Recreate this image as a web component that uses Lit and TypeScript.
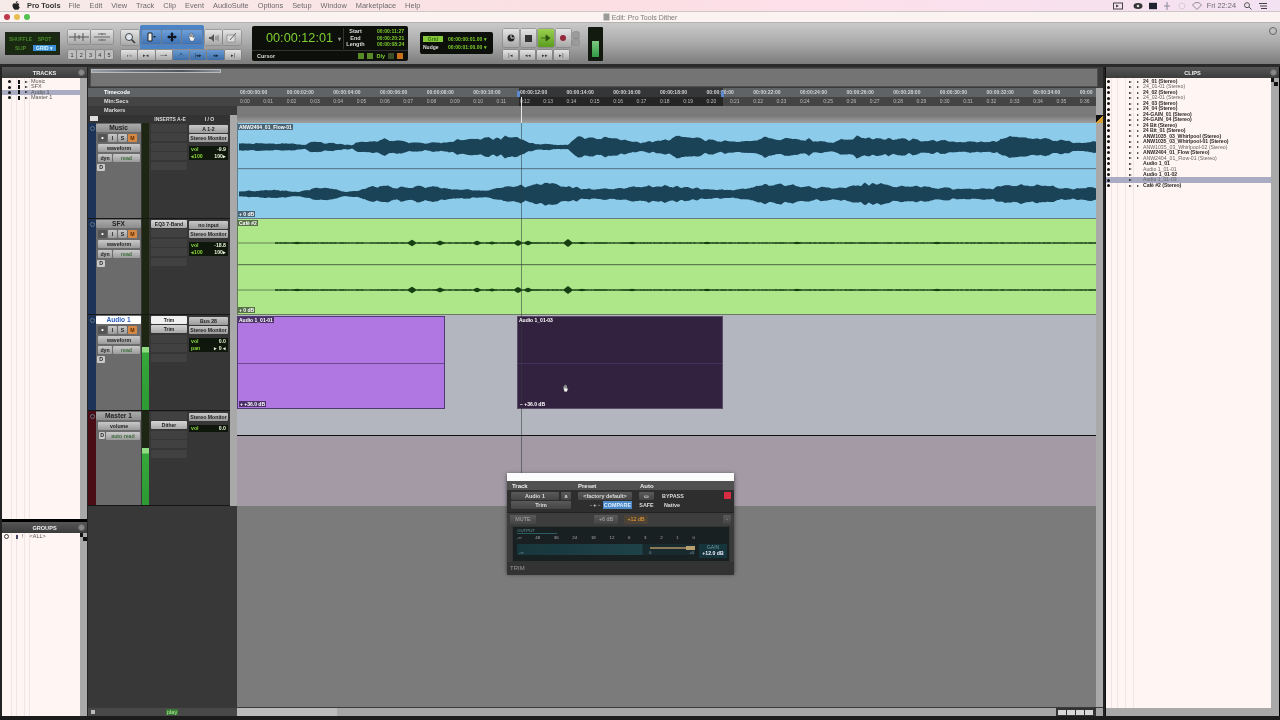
import { LitElement, html, css } from 'lit';
import { customElement } from 'lit/decorators.js';

const MENUS = ['File', 'Edit', 'View', 'Track', 'Clip', 'Event', 'AudioSuite', 'Options', 'Setup', 'Window', 'Marketplace', 'Help'];

const CLIPS = [
  ['24_01 (Stereo)', 1, 1], ['24_01-01 (Stereo)', 0, 1], ['24_02 (Stereo)', 1, 1], ['24_02-01 (Stereo)', 0, 1],
  ['24_03 (Stereo)', 1, 1], ['24_04 (Stereo)', 1, 1], ['24-GAIN_01 (Stereo)', 1, 1], ['24-GAIN_04 (Stereo)', 1, 1],
  ['24 Bit (Stereo)', 1, 1], ['24 Bit_01 (Stereo)', 1, 1], ['ANW1035_03_Whirlpool (Stereo)', 1, 1],
  ['ANW1035_03_Whirlpool-01 (Stereo)', 1, 1], ['ANW1035_03_Whirlpool-02 (Stereo)', 0, 1], ['ANW2404_01_Flow (Stereo)', 1, 1],
  ['ANW2404_01_Flow-01 (Stereo)', 0, 1], ['Audio 1_01', 1, 0], ['Audio 1_01-01', 0, 0], ['Audio 1_01-02', 1, 0],
  ['Audio 1_01-03', 0, 0], ['Café #2 (Stereo)', 1, 1],
] as [string, number, number][];

const TRACKS = [
  { name: 'Music', strip: '#1d3358', h: 96, view: 'waveform', auto: 'read', slots: ['', '', '', '', ''], io: ['A 1-2', 'Stereo Monitor'], vol: '-9.9', pan: ['◂100', '100▸'], meter: 0 },
  { name: 'SFX', strip: '#1d3358', h: 96, view: 'waveform', auto: 'read', slots: ['EQ3 7-Band', '', '', '', ''], io: ['no input', 'Stereo Monitor'], vol: '-18.8', pan: ['◂100', '100▸'], meter: 0 },
  { name: 'Audio 1', strip: '#1d3358', h: 96, view: 'waveform', auto: 'read', slots: ['Trim', 'Trim', '', '', ''], io: ['Bus 28', 'Stereo Monitor'], vol: '0.0', pan: ['pan', '▸ 0 ◂'], meter: 66, active: true },
  { name: 'Master 1', strip: '#4a0d16', h: 95, view: 'volume', auto: 'auto read', slots: ['', 'Dither', '', '', ''], io: ['Stereo Monitor'], vol: '0.0', meter: 61, master: true },
];

const MUSIC_A = [[0, 3.5], [53, 3.5], [68, 2], [75, 5], [98, 3.5], [115, 1.5], [119, 5], [135, 6], [148, 8], [163, 6], [183, 4], [203, 4], [225, 8], [253, 9], [278, 11], [298, 3], [331, 2], [341, 11], [373, 9], [403, 5], [423, 6], [443, 11], [473, 7], [503, 5], [528, 10], [563, 9], [593, 5], [623, 11], [663, 8], [713, 6], [753, 5], [773, 10], [813, 8], [838, 5], [859, 6]];
const MUSIC_B = [[0, 3], [40, 3.5], [62, 2], [72, 5], [90, 6], [110, 2], [122, 3], [135, 8], [160, 7], [190, 8], [215, 5], [250, 4], [280, 8], [300, 11], [325, 9], [350, 5], [400, 7], [430, 9], [460, 6], [500, 4], [530, 11], [560, 9], [600, 5], [625, 11], [660, 9], [710, 6], [750, 5], [775, 11], [810, 8], [840, 5], [859, 7]];
const SFX_BUMPS = [[60, 1], [175, 3], [203, 2.2], [240, 2], [255, 1.2], [281, 2.6], [291, 2], [331, 3.8], [345, 1], [395, 1], [470, 1], [560, 1], [700, 1]];

function noise(x: number, seed: number) {
  const v = Math.sin(x * 12.9898 + seed * 78.233) * 43758.5453;
  return v - Math.floor(v);
}

// value noise, so the outline comes out in lumps and not as a comb
function lumpy(x: number, seed: number) {
  const i = Math.floor(x / 4);
  const t = x / 4 - i;
  return noise(i, seed) * (1 - t) + noise(i + 1, seed) * t;
}

function level(env: number[][], x: number) {
  for (let i = 1; i < env.length; i++) {
    if (x <= env[i][0]) {
      const t = (x - env[i - 1][0]) / (env[i][0] - env[i - 1][0]);
      return env[i - 1][1] + (env[i][1] - env[i - 1][1]) * t;
    }
  }
  return env[env.length - 1][1];
}

function musicWave(env: number[][], cy: number, seed: number) {
  const up: string[] = [];
  const down: string[] = [];
  for (let x = 2; x <= 859; x++) {
    const a = level(env, x) * (0.7 + 0.4 * lumpy(x, seed));
    up.push(`${x},${(cy - a - 0.5 * noise(x, seed)).toFixed(1)}`);
    down.unshift(`${x},${(cy + a + 0.5 * noise(x, seed + 3)).toFixed(1)}`);
  }
  return up.concat(down).join(' ');
}

function sfxWave(cy: number, seed: number) {
  const up: string[] = [];
  const down: string[] = [];
  for (let x = 38; x <= 859; x++) {
    let a = 0.55 + 0.25 * noise(x, seed);
    for (const [bx, ba] of SFX_BUMPS) {
      const d = Math.abs(x - bx);
      if (d < 3.5) a = Math.max(a, ba * (1 - (d / 3.5) * 0.7) + 0.3);
    }
    up.push(`${x},${(cy - a).toFixed(1)}`);
    down.unshift(`${x},${(cy + a).toFixed(1)}`);
  }
  return up.concat(down).join(' ');
}

@customElement('app-root')
export class AppRoot extends LitElement {
  static styles = css`
    :host { display: block; width: 1280px; height: 720px; overflow: hidden; background: #161616; font-family: "Liberation Sans", Arial, sans-serif; }
    .app { position: relative; width: 1280px; height: 720px; display: flex; flex-direction: column; filter: blur(0.4px); }

    .menubar { height: 11px; flex: none; display: flex; align-items: center; background: linear-gradient(90deg, #f7ebe9, #fbdfe3 45%, #fde0ea 65%, #f3e2f2); font-size: 7.4px; color: #6d6a6c; }
    .apple { width: 8px; height: 9px; margin: 0 7px 0 12px; }
    .menubar b { color: #333; margin-right: 8px; }
    .menus { display: flex; gap: 9px; }
    .tray { margin-left: auto; display: flex; align-items: center; gap: 5px; padding-right: 12px; }
    .tray svg { width: 10px; height: 8px; }
    .tray .cam { margin-right: 5px; }
    .tray .eye { margin-right: 1px; }
    .tray .srch { margin-left: 2px; }
    .titlebar { height: 12px; flex: none; display: flex; align-items: center; justify-content: center; position: relative; background: #fbf3f1; border-top: 1px solid #cfc6c8; border-bottom: 1px solid #b5b0b0; box-sizing: border-box; font-size: 7px; color: #7d7a7a; gap: 2px; }
    .lights { position: absolute; left: 4px; top: 2px; display: flex; gap: 4px; }
    .lights i { width: 6px; height: 6px; border-radius: 50%; }

    .toolbar { height: 41px; flex: none; display: flex; align-items: flex-start; background: linear-gradient(#c9c9c9, #adadad 45%, #7c7c7c); }
    .modes { margin: 9px 0 0 5px; width: 55px; height: 23px; box-sizing: border-box; background: #1a2a12; border: 1px solid #222; padding: 2px 3px; display: grid; grid-template-columns: 1fr 1fr; font-size: 5px; font-weight: bold; color: #4b8a2c; text-align: center; gap: 1px; align-items: center; }
    .modes .on { background: #3f8ed8; color: #dff; }
    .zoomgrp { margin: 7px 0 0 8px; width: 45px; display: flex; flex-direction: column; gap: 6px; }
    .rowb { display: flex; gap: 1px; }
    .tb { background: linear-gradient(#e4e4e4, #a9a9a9); border-radius: 1px; display: flex; align-items: center; justify-content: center; color: #333; box-sizing: border-box; box-shadow: 0 0 0 .5px #7a7a7a; }
    .zoomgrp .big { height: 14px; flex: 1; }
    .num { height: 9px; flex: 1; font-size: 5.5px; background: #bdbdbd; }
    .tools { margin: 2px 0 0 8px; width: 120px; display: flex; flex-direction: column; gap: 1px; }
    .toolrow { display: flex; align-items: flex-end; height: 24px; gap: 1px; }
    .toolrow .tb { height: 15px; width: 18px; margin-bottom: 4px; }
    .bluegrp { width: 64px; height: 24px; box-sizing: border-box; background: #4c82c6; border-radius: 2px 2px 0 0; display: flex; gap: 1px; padding: 5px 2px 0; }
    .bluegrp .tb { width: 20px; height: 14px; margin: 0; background: linear-gradient(#6ea0da, #3f72b4); }
    .smalls { display: flex; gap: 1px; }
    .smalls .tb { height: 10px; flex: 1; font-size: 5px; }
    .smalls .blue { background: linear-gradient(#6c9bd2, #3d6ea8); color: #123; }
    .counter { margin: 3px 0 0 11px; width: 156px; height: 35px; background: #0c0f0a; border-radius: 2px; box-sizing: border-box; display: flex; flex-direction: column; color: #ddd; font-size: 5.5px; font-weight: bold; }
    .ctop { display: flex; height: 24px; align-items: center; border-bottom: 1px solid #333; }
    .bigtime { font-size: 12.7px; font-weight: normal; color: #7fd02e; margin-left: 14px; width: 72px; }
    .caret { color: #999; font-size: 6px; width: 5px; }
    .clabels { width: 24px; margin-left: 0; text-align: center; line-height: 6.4px; border-left: 1px solid #333; height: 21px; display: flex; flex-direction: column; justify-content: center; box-sizing: border-box; }
    .cvals { margin-left: 10px; color: #7fd02e; line-height: 6.4px; font-size: 5px; }
    .cbot { display: flex; align-items: center; flex: 1; padding: 0 5px; }
    .cbot i { width: 6px; height: 6px; background: #5a8a26; margin-left: 3px; }
    .nudge { margin: 9px 0 0 12px; width: 73px; height: 22px; background: #0c0f0a; border-radius: 2px; box-sizing: border-box; padding: 3px; display: grid; grid-template-columns: 20px 1fr; font-size: 5px; font-weight: bold; align-items: center; color: #ddd; }
    .nudge .gridb { background: #83c93a; color: #3d6a14; text-align: center; }
    .nudge .v { color: #7fd02e; padding-left: 5px; white-space: nowrap; }
    .transport { margin: 6px 0 0 10px; width: 77px; display: flex; flex-direction: column; gap: 3px; }
    .transport .big { width: 15.500px; height: 18px; }
    .transport .tb.go { background: linear-gradient(#9ad14e, #5c9c20); }
    .transport .low { width: 15px; height: 10px; font-size: 5px; }
    .wee { display: flex; flex-direction: column; gap: 1px; justify-content: center; }
    .wee .tb { width: 6px; height: 6px; background: #9b9b9b; }
    .mtr { margin: 4px 0 0 8px; width: 15px; height: 34px; background: #12190f; border-radius: 1px; display: flex; justify-content: center; align-items: flex-end; padding-bottom: 4px; box-sizing: border-box; }
    .mtr i { width: 7px; height: 16px; background: linear-gradient(#7fc87f, #2f9c45); }
    .tcirc { margin: 4px 3px 0 auto; width: 6px; height: 6px; border-radius: 50%; border: 1px solid #666; }

    .work { flex: 1; min-height: 0; display: flex; background: #232323; border-top: 3px solid #2a2a2a; }
    .side { width: 85px; margin-left: 2px; display: flex; flex-direction: column; background: #000; }
    .phead { height: 11px; flex: none; background: linear-gradient(#565656, #3c3c3c); color: #eee; font-size: 5.6px; font-weight: bold; display: flex; align-items: center; justify-content: center; position: relative; }
    .phead i { position: absolute; right: 2px; top: 2px; width: 5px; height: 5px; border-radius: 50%; background: #888; border: 1px solid #666; }
    .plist { flex: 1; display: flex; min-height: 0; }
    .rows { flex: 1; background-color: #fff5f2; font-size: 5.5px; color: #555; padding-top: 1px; min-width: 0; }
    .tracksl { background-image: linear-gradient(90deg, transparent 9px, #f0e4e6 9px, #f0e4e6 10px, transparent 10px, transparent 14px, #f0e4e6 14px, #f0e4e6 15px, transparent 15px, transparent 22px, #f0e4e6 22px, #f0e4e6 23px, transparent 23px, transparent 27px, #f0e4e6 27px, #f0e4e6 28px, transparent 28px); }
    .vs { width: 7px; flex: none; background: #a9a9a9; }
    .trow { height: 5.4px; display: flex; align-items: center; line-height: 5.4px; white-space: nowrap; }
    .trow.sel { background: #a9acc2; }
    .dot { width: 3px; height: 3px; border-radius: 50%; background: #111; flex: none; }
    .bar { width: 2px; height: 4px; background: #111; flex: none; }
    .arr { width: 0; height: 0; border-left: 3px solid #222; border-top: 1.5px solid transparent; border-bottom: 1.5px solid transparent; flex: none; }
    .side .gap { height: 3px; flex: none; }

    .center { width: 1015px; margin: 0 2px 0 1px; display: flex; flex-direction: column; background: #3a3a3a; }
    .overview { height: 19px; flex: none; background: #747474; box-sizing: border-box; border: 1px solid #4e4e4e; margin: 1px 0 0 2px; width: 1008px; }
    .overview div { width: 130px; height: 4px; background: linear-gradient(90deg, #9aa0a8, #717780 30%, #51565e 70%, #8c929a); border: .5px solid #b8b8b8; box-sizing: border-box; }
    .ruler { height: 27px; flex: none; display: flex; margin-top: 1px; background: #111; }
    .rlabels { width: 149px; flex: none; font-size: 5.6px; font-weight: bold; color: #ddd; }
    .rlabels div { height: 9px; padding-left: 16px; line-height: 9px; box-sizing: border-box; }
    .rlabels .r1 { background: #5f6366; color: #fff; }
    .rlabels .r2 { background: #444; }
    .rlabels .r3 { background: #3a3a3a; }
    .rbody { position: relative; width: 859px; overflow: hidden; background: linear-gradient(#5f6366 0, #5f6366 9px, #444 9px, #444 18px, #7a7a7a 18px); }
    .tc, .ms { height: 9px; display: flex; padding-left: 3px; font-size: 5px; font-weight: bold; color: #d4d4d4; line-height: 9px; position: relative; z-index: 1; white-space: nowrap; }
    .ms { color: #bbb; font-weight: normal; }
    .tc span { width: 46.67px; flex: none; }
    .ms span { width: 23.33px; flex: none; }
    .mk { height: 9px; }
    .selr { position: absolute; left: 282px; width: 204px; top: 0; height: 18px; background: rgba(0, 0, 0, .45); }
    .flag { position: absolute; top: 3px; width: 3px; height: 6px; background: #5a8ad0; z-index: 2; }
    .phr { position: absolute; left: 284px; top: 9px; width: 1px; height: 18px; background: #e5e5e5; z-index: 3; }
    .hrow { height: 8px; flex: none; display: flex; }
    .hleft { width: 142px; flex: none; background: #333; display: grid; grid-template-columns: 63px 38px 41px; font-size: 5px; font-weight: bold; color: #ddd; line-height: 8px; text-align: center; }
    .hleft i { width: 8px; height: 5px; margin: 1px 0 0 2px; background: #ddd; display: block; }
    .div { width: 7px; flex: none; background: #a9a9a9; }
    .hedit { width: 859px; background: linear-gradient(#757575, #a0a0a0); position: relative; }
    .hcorner { width: 7px; background: #a9a9a9; display: flex; }
    .hcorner i { width: 7px; height: 8px; background: linear-gradient(135deg, #111 50%, #d8a032 50%); }

    .main { height: 383px; flex: none; display: flex; position: relative; }
    .heads { width: 142px; flex: none; }
    .thead { display: grid; grid-template-columns: 8px 45px 1px 7px 2px 36px 2px 39px 2px; box-sizing: border-box; border-bottom: 1px solid #161616; background: #363636; }
    .strip { position: relative; }
    .strip::before { content: ''; position: absolute; left: 2px; top: 3px; width: 3px; height: 3px; border-radius: 50%; border: .5px solid #5c7488; }
    .ctrl { grid-column: 2; background: #6b6b6b; padding: 1px 0 0; display: flex; flex-direction: column; gap: 2px; }
    .b { background: linear-gradient(#c9c9c9, #9a9a9a); color: #222; font-size: 5.2px; font-weight: bold; height: 8px; line-height: 8px; text-align: center; border-radius: 1px; white-space: nowrap; overflow: hidden; }
    .tname { font-size: 6.6px; background: linear-gradient(#aaa, #8c8c8c); }
    .tname.act { background: #fff; color: #2a5cc0; }
    .rsm { display: grid; grid-template-columns: repeat(4, 9px); gap: 1px; padding-left: 2px; }
    .rsm .m { background: #d68a45; color: #5a2c00; }
    .rsm .r { background: #555; color: #fff; font-size: 7px; }
    .line2 { display: flex; gap: 1px; padding: 0 1px 0 2px; }
    .line2 .b:first-child { width: 14px; flex: none; }
    .line2 .b:last-child { flex: 1; color: #3b6a3b; }
    .line2 .b.full { flex: 1; width: auto; color: #222; }
    .dbtn { width: 8px; margin-left: 1px; height: 7px; line-height: 7px; background: #c9c9c9; }
    .mcol { grid-column: 4; background: #1c2612; display: flex; flex-direction: column; justify-content: flex-end; }
    .mcol i { display: block; background: linear-gradient(#8fdc83 0, #8fdc83 5px, #36a73a 6px, #2d9a34); }
    .ins { grid-column: 6; padding-top: 1px; display: flex; flex-direction: column; gap: 1.4px; }
    .slot { height: 8px; background: #414141; border-radius: 1px; font-size: 5px; line-height: 8px; text-align: center; font-weight: bold; color: #222; }
    .slot.full { background: linear-gradient(#d5d5d5, #a8a8a8); }
    .slot.first { background: #f0f0f0; }
    .ioc { grid-column: 8; padding-top: 2px; display: flex; flex-direction: column; gap: 1px; }
    .vol { margin-top: 3px; background: #0f170c; padding: 0 2px; font-size: 5.2px; font-weight: bold; color: #86d637; line-height: 7px; }
    .vol div { display: flex; justify-content: space-between; }
    .vol .wh { color: #e8f5d8; }

    .edit { width: 859px; flex: none; display: flex; flex-direction: column; position: relative; }
    .lane { position: relative; flex: none; background: #b3b6bf; overflow: hidden; }
    .lane svg { position: absolute; left: 0; top: 0; width: 859px; height: 96px; }
    .clip { position: absolute; box-sizing: border-box; top: 1px; height: 93px; border: 1px solid #4f3a72; }
    .clip::after { content: ''; position: absolute; left: 0; right: 0; top: 46px; height: 1px; background: rgba(80, 55, 110, .7); }
    .lab { position: absolute; font-size: 5px; font-weight: bold; color: #fff; line-height: 6px; padding: 0 1px; white-space: nowrap; z-index: 2; }
    .lab.t { left: 1px; top: 1px; }
    .lab.g { left: 1px; bottom: 2px; }
    .master { background: linear-gradient(#b3b6bf 0, #b3b6bf 24px, #111 24px, #111 25px, #a39aa5 25px); }
    .playhead { position: absolute; left: 284px; top: 0; width: 1px; height: 350px; background: rgba(50, 60, 60, .55); }
    .vscroll { width: 7px; flex: none; background: #a9a9a9; }
    .lower { flex: 1; display: flex; min-height: 0; }
    .lleft { width: 149px; background: #383838; flex: none; }
    .ledit { width: 859px; background: #7b7b7b; }
    .bottom { height: 8px; flex: none; display: flex; margin-top: 1px; }
    .bleft { width: 149px; background: #484848; display: flex; align-items: center; font-size: 5.6px; color: #bbb; position: relative; }
    .bleft span { position: absolute; left: 78px; color: #b5f0a0; background: #3a7a34; padding: 0 1px; }
    .bleft i { margin-left: 3px; width: 4px; height: 4px; background: #bbb; }
    .bright { width: 866px; display: flex; background: #a6a6a6; }
    .thumb { width: 100px; background: #bcbcbc; }
    .zooms { margin: 0 7px 0 auto; width: 40px; background: #333; display: flex; gap: 1px; align-items: center; padding-left: 2px; box-sizing: border-box; }
    .zooms i { width: 8px; height: 5px; background: #d8d8d8; }

    .clips { flex: 1; display: flex; flex-direction: column; padding-right: 1px; background: #000; min-width: 0; border-left: 1px solid #111; }
    .clipl { background-image: linear-gradient(90deg, transparent 5px, #f0e4e6 5px, #f0e4e6 6px, transparent 6px, transparent 11px, #f0e4e6 11px, #f0e4e6 12px, transparent 12px, transparent 19px, #f0e4e6 19px, #f0e4e6 20px, transparent 20px, transparent 27px, #f0e4e6 27px, #f0e4e6 28px, transparent 28px); }
    .crow { height: 5.47px; display: flex; align-items: center; line-height: 5.47px; white-space: nowrap; position: relative; }
    .crow .dot { margin-left: 1px; }
    .crow .arr { margin-left: 19px; }
    .crow .ar2 { margin-left: 5px; border-left-width: 2px; border-top-width: 1px; border-bottom-width: 1px; }
    .crow .txt { position: absolute; left: 37px; color: #666; font-size: 5.2px; }
    .crow .txt.bold { color: #2a2a2a; font-weight: bold; letter-spacing: -.08px; }
    .cbar { height: 8px; flex: none; background: #a9a9a9; }

    .plugin { position: absolute; left: 507px; top: 473px; width: 227px; height: 100px; background: #3a3a3a; display: flex; flex-direction: column; box-shadow: 0 1px 4px rgba(0, 0, 0, .6); font-size: 5.4px; font-weight: bold; color: #ddd; z-index: 5; }
    .ptitle { height: 8px; background: #fbfbfb; flex: none; }
    .phd { height: 9px; flex: none; background: #505050; display: flex; align-items: center; font-size: 6px; color: #eee; }
    .phd span:nth-child(1) { margin-left: 5px; width: 66px; }
    .phd span:nth-child(2) { width: 62px; }
    .pctl { height: 22px; flex: none; display: grid; grid-template-columns: 48px 2px 10px 7px 54px 7px 15px 8px 20px; grid-template-rows: 8px 8px; row-gap: 1px; padding: 2px 4px; position: relative; background: #2e2e2e; box-sizing: border-box; text-align: center; line-height: 8px; }
    .pb { background: linear-gradient(#5a5a5a, #444); border-radius: 1px; white-space: nowrap; }
    .pctl .wide { grid-column: 1 / span 3; }
    .c3 { grid-column: 3; }
    .c5 { grid-column: 5; }
    .c7 { grid-column: 7; }
    .c9 { grid-column: 9; white-space: nowrap; }
    .cmp { display: flex; gap: 3px; justify-content: flex-end; white-space: nowrap; }
    .cmp b { background: #4d88c8; color: #dcefff; padding: 0 1px; }
    .rsq { position: absolute; left: 217px; top: 2px; width: 7px; height: 7px; background: #d92c40; border-radius: 1px; }
    .pmid { height: 14px; flex: none; background: #3d3d3d; display: flex; align-items: center; padding: 0 3px; border-top: 1px solid #222; box-sizing: border-box; }
    .pmid .pb { line-height: 9px; height: 9px; color: #aaa; font-weight: normal; text-align: center; }
    .pmid .mute { width: 26px; margin-right: 58px; }
    .pmid .six { width: 24px; margin-right: 6px; }
    .pmid .twelve { width: 24px; color: #f0a030; background: #4c4236; }
    .pmid .pop { width: 8px; margin-left: auto; }
    .pmeter { margin: 0 4px 0 5px; height: 36px; flex: none; background: #192022; border: 1px solid #333; box-sizing: border-box; padding: 2px 4px; display: flex; flex-direction: column; gap: 1px; position: relative; font-size: 4.4px; font-weight: normal; color: #6a9a9a; }
    .pmeter > span { width: 40px; border-bottom: 1px solid #2a5a62; line-height: 4px; }
    .ticks { display: flex; justify-content: space-between; color: #aaa; padding-right: 30px; }
    .slider { height: 11px; width: 178px; margin-top: 3px; background: linear-gradient(90deg, #17363c, #1e4248 70%, #182a2e 71%); display: flex; align-items: flex-start; justify-content: flex-end; padding-top: 2px; box-sizing: border-box; position: relative; color: #89a; }
    .fillp { width: 36px; height: 1.500px; margin-top: 1px; background: #8a7a58; }
    .thumbp { width: 9px; height: 4px; background: #b9a070; }
    .sl { position: absolute; bottom: 0; line-height: 5px; }
    .gain { position: absolute; right: 2px; top: 17px; width: 28px; height: 14px; background: #16343c; color: #eef; font-size: 5.2px; font-weight: bold; text-align: center; line-height: 6px; }
    .gain em { font-style: normal; font-weight: normal; color: #6a9a9a; }
    .pfoot { flex: 1; font-size: 6px; color: #999; padding-left: 3px; line-height: 13px; background: #333; font-weight: normal; }
    .hand { position: absolute; left: 562px; top: 384px; width: 7px; height: 8px; z-index: 4; }
  `;

  private trackHead(t: any) {
    return html`
      <div class="thead" style="height:${t.h}px">
        <div class="strip" style="background:${t.strip}"></div>
        <div class="ctrl">
          <div class="b tname ${t.active ? 'act' : ''}">${t.name}</div>
          ${t.master
            ? html`
                <div class="line2"><div class="b full">${t.view}</div></div>
                <div class="line2"><div class="b dbtn" style="width:6px">D</div><div class="b">${t.auto}</div></div>`
            : html`
                <div class="rsm"><div class="b r">•</div><div class="b">I</div><div class="b">S</div><div class="b m">M</div></div>
                <div class="line2"><div class="b full">${t.view}</div></div>
                <div class="line2"><div class="b">dyn</div><div class="b">${t.auto}</div></div>
                <div class="b dbtn">D</div>`}
        </div>
        <div class="mcol"><i style="height:${t.meter}%"></i></div>
        <div class="ins">
          ${t.slots.map((s: string, i: number) => html`<div class="slot ${s ? 'full' : ''} ${s && t.active && i === 0 ? 'first' : ''}">${s}</div>`)}
        </div>
        <div class="ioc">
          ${t.io.map((s: string) => html`<div class="b">${s}</div>`)}
          <div class="vol">
            <div><span>vol</span><span class="wh">${t.vol}</span></div>
            ${t.pan ? html`<div><span>${t.pan[0]}</span><span class="wh">${t.pan[1]}</span></div>` : ''}
          </div>
        </div>
      </div>
    `;
  }

  private lanes() {
    return html`
      <div class="lane" style="height:96px;background:#8dcbea">
        <svg viewBox="0 0 859 96">
          <polygon points="${musicWave(MUSIC_A, 24, 1)}" fill="#1a4358"></polygon>
          <polygon points="${musicWave(MUSIC_B, 71, 5)}" fill="#1a4358"></polygon>
          <rect x="0" y="45" width="859" height="1.2" fill="#5d7f92"></rect>
          <rect x="0" y="95" width="859" height="1" fill="#667a85"></rect>
          <rect x="0" y="0" width="1" height="96" fill="#5d7f92"></rect>
        </svg>
        <span class="lab t" style="background:#4a6676">ANW2404_01_Flow-01</span>
        <span class="lab g" style="background:#4a6676">+ 0 dB</span>
      </div>
      <div class="lane" style="height:96px;background:#aee68a">
        <svg viewBox="0 0 859 96">
          <rect x="0" y="23.6" width="859" height=".8" fill="#556b45"></rect>
          <rect x="0" y="70.6" width="859" height=".8" fill="#556b45"></rect>
          <polygon points="${sfxWave(24, 2)}" fill="#163f12"></polygon>
          <polygon points="${sfxWave(71, 2)}" fill="#163f12"></polygon>
          <rect x="0" y="45" width="859" height="1.2" fill="#5f7a50"></rect>
          <rect x="0" y="95" width="859" height="1" fill="#6a7a60"></rect>
          <rect x="0" y="0" width="1" height="96" fill="#5f7a50"></rect>
        </svg>
        <span class="lab t" style="background:#57704a">Café #2</span>
        <span class="lab g" style="background:#57704a">+ 0 dB</span>
      </div>
      <div class="lane" style="height:96px">
        <div class="clip" style="left:0;width:208px;background:#b077e3">
          <span class="lab t" style="background:#4c3268;left:0;top:0">Audio 1_01-01</span>
          <span class="lab g" style="background:#4c3268;left:1px;bottom:1px">+ +36.0 dB</span>
        </div>
        <div class="clip" style="left:280px;width:206px;background:#33223f;border-color:#5b4a68">
          <span class="lab t" style="left:0;top:0">Audio 1_01-03</span>
          <span class="lab g" style="left:1px;bottom:1px">− +36.0 dB</span>
        </div>
      </div>
      <div class="lane master" style="height:95px"></div>
    `;
  }

  private plugin() {
    return html`
      <div class="plugin">
        <div class="ptitle"></div>
        <div class="phd"><span>Track</span><span>Preset</span><span>Auto</span></div>
        <div class="pctl">
          <div class="pb">Audio 1</div>
          <div class="pb c3">a</div>
          <div class="pb c5">&lt;factory default&gt;</div>
          <div class="pb c7">▭</div>
          <div class="c9">BYPASS</div>
          <div class="pb wide">Trim</div>
          <div class="cmp c5">- + ▫<b>COMPARE</b></div>
          <div class="c7">SAFE</div>
          <div class="c9">Native</div>
          <div class="rsq"></div>
        </div>
        <div class="pmid">
          <div class="pb mute">MUTE</div>
          <div class="pb six">+6 dB</div>
          <div class="pb twelve">+12 dB</div>
          <div class="pb pop">▫</div>
        </div>
        <div class="pmeter">
          <span>OUTPUT</span>
          <div class="ticks"><span>-∞</span><span>48</span><span>36</span><span>24</span><span>18</span><span>12</span><span>6</span><span>3</span><span>2</span><span>1</span><span>0</span></div>
          <div class="slider">
            <div class="fillp"></div><div class="thumbp"></div>
            <span class="sl" style="left:2px">-∞</span><span class="sl" style="left:132px">0</span><span class="sl" style="right:1px">+6</span>
          </div>
          <div class="gain"><em>GAIN</em><br />+12.0 dB</div>
        </div>
        <div class="pfoot">TRIM</div>
      </div>
    `;
  }

  render() {
    const times: string[] = [];
    for (let i = 0; i < 18; i++) times.push(`00:00:${String(i * 2).padStart(2, '0')}:00`);
    times.push('00:00');
    const secs: string[] = [];
    for (let i = 0; i <= 36; i++) secs.push(`0:${String(i).padStart(2, '0')}`);
    const trackList = ['Music', 'SFX', 'Audio 1', 'Master 1'];

    return html`
      <div class="app">
        <div class="menubar">
          <svg class="apple" viewBox="0 0 16 18"><path fill="#222" d="M11.5 0c.1 1.2-.4 2.3-1.1 3.1-.8.9-1.9 1.4-2.9 1.3-.1-1.1.4-2.2 1.1-3C9.300.6 10.500.100 11.500 0zM15 6.100c-1 .6-1.700 1.700-1.700 3 0 1.500.9 2.700 2.200 3.200-.4 1.200-1 2.300-1.700 3.300-.7 1-1.400 2-2.500 2-1 0-1.400-.6-2.600-.6s-1.600.6-2.600.6c-1.100 0-1.900-1.100-2.600-2.100C1.800 13.700.800 10.700 1 8.200c.2-2.200 1.800-3.800 3.800-3.800 1.100 0 2.100.7 2.800.7.700 0 1.800-.8 3.100-.7 1.800.1 3.300.7 4.300 1.700z"></path></svg>
          <b>Pro Tools</b>
          <div class="menus">${MENUS.map((m) => html`<span>${m}</span>`)}</div>
          <div class="tray">
            <svg class="cam" viewBox="0 0 10 8"><rect x=".5" y="1" width="9" height="6" fill="none" stroke="#444"></rect><path d="M3 2.500l3 1.500-3 1.500z" fill="#444"></path></svg>
            <svg class="eye" viewBox="0 0 10 8"><ellipse cx="5" cy="4" rx="4.500" ry="3" fill="#333"></ellipse><circle cx="5" cy="4" r="1.300" fill="#ddd"></circle></svg>
            <svg viewBox="0 0 10 8" style="width:8px"><rect width="10" height="8" fill="#1f2430"></rect></svg>
            <svg viewBox="0 0 10 8"><path d="M5 0v8M2 4h6" stroke="#8a8a9a"></path></svg>
            <svg viewBox="0 0 10 8"><circle cx="5" cy="4" r="3" fill="none" stroke="#d8cdd4"></circle></svg>
            <svg viewBox="0 0 10 8"><path d="M.5 3C3-.3 7-.3 9.500 3L5 7.500z" fill="none" stroke="#666" stroke-width=".7"></path></svg>
            <span>Fri 22:24</span>
            <svg class="srch" viewBox="0 0 10 8"><circle cx="4" cy="3.200" r="2.500" fill="none" stroke="#555"></circle><path d="M6 5l2.500 2.500" stroke="#555"></path></svg>
            <svg viewBox="0 0 10 8"><path d="M1 1.500h8M2 4h7M3 6.500h6" stroke="#444"></path></svg>
          </div>
        </div>
        <div class="titlebar">
          <div class="lights"><i style="background:#c0394a"></i><i style="background:#e8bd50"></i><i style="background:#4fc24f"></i></div>
          <svg width="7" height="8" viewBox="0 0 7 8"><rect x=".5" y=".5" width="6" height="7" fill="#9a9a9a"></rect></svg>
          <span>Edit: Pro Tools Dither</span>
        </div>
        <div class="toolbar">
          <div class="modes"><span>SHUFFLE</span><span>SPOT</span><span>SLIP</span><span class="on">GRID ▾</span></div>
          <div class="zoomgrp">
            <div class="rowb">
              <div class="tb big"><svg width="20" height="10" viewBox="0 0 20 10"><path d="M0 5h20M6 1v8M10 3v4M14 1v8" stroke="#555" stroke-width="1"></path></svg></div>
              <div class="tb big"><svg width="20" height="10" viewBox="0 0 20 10"><path d="M2 5h16M10 1v2M10 7v2M6 2h8M6 8h8" stroke="#666"></path></svg></div>
            </div>
            <div class="rowb">${[1, 2, 3, 4, 5].map((n) => html`<div class="tb num">${n}</div>`)}</div>
          </div>
          <div class="tools">
            <div class="toolrow">
              <div class="tb"><svg width="12" height="12" viewBox="0 0 12 12"><circle cx="5" cy="5" r="3.500" fill="#dfe6ee" stroke="#444"></circle><path d="M7.500 7.500l3.500 3.500" stroke="#333" stroke-width="1.500"></path></svg></div>
              <div class="bluegrp">
                <div class="tb"><svg width="10" height="10" viewBox="0 0 10 10"><path d="M2 1h4v8H2z" fill="#f2f2f2" stroke="#222"></path><path d="M7 4h3L8.500 6z" fill="#222"></path></svg></div>
                <div class="tb"><svg width="10" height="10" viewBox="0 0 10 10"><path d="M5 0l2 2.500H6V4h1.500V3L10 5 7.500 7V6H6v1.500h1L5 10 3 7.500h1V6H2.500v1L0 5l2.500-2v1H4V2.500H3z" fill="#0d1520"></path></svg></div>
                <div class="tb"><svg width="10" height="10" viewBox="0 0 10 10"><path d="M2 5V3h1v2-3.500h1V5 1h1v4-3h1v4l1-1.500L8 5 6.500 9h-3z" fill="#f4f4f4" stroke="#333" stroke-width=".3"></path></svg></div>
              </div>
              <div class="tb"><svg width="11" height="10" viewBox="0 0 11 10"><path d="M1 4h2l3-3v8L3 6H1z" fill="#555"></path><path d="M8 3v4M10 2v6" stroke="#777"></path></svg></div>
              <div class="tb"><svg width="12" height="12" viewBox="0 0 12 12"><rect x="1" y="3" width="8" height="7" fill="#ddd" stroke="#777" stroke-width=".6"></rect><path d="M4 8l6-7" stroke="#666"></path></svg></div>
            </div>
            <div class="smalls">
              ${['‹·›', '▸◂', '—▪', '·^·', '|◂▸', '◂▸', '▸|'].map((s, i) => html`<div class="tb ${i >= 3 && i <= 5 ? 'blue' : ''}">${s}</div>`)}
            </div>
          </div>
          <div class="counter">
            <div class="ctop">
              <span class="bigtime">00:00:12:01</span><span class="caret">▾</span>
              <div class="clabels"><span>Start</span><span>End</span><span>Length</span></div>
              <div class="cvals">00:00:11:27<br />00:00:20:21<br />00:00:08:24</div>
            </div>
            <div class="cbot"><span>Cursor</span><span style="flex:1"></span><i></i><i></i><span style="color:#7fd02e;margin-left:3px">Dly</span><i style="background:#3b4c28"></i><i style="background:#c9701c"></i></div>
          </div>
          <div class="nudge">
            <span class="gridb">Grid</span><span class="v">00:00:00:01.00 ▾</span>
            <span>Nudge</span><span class="v">00:00:01:00.00 ▾</span>
          </div>
          <div class="transport">
            <div class="rowb" style="gap:2px">
              <div class="tb big"><svg width="8" height="8" viewBox="0 0 8 8"><circle cx="4" cy="4" r="3.500" fill="#222"></circle><path d="M4 1v3h3" stroke="#ddd" fill="none"></path></svg></div>
              <div class="tb big"><svg width="7" height="7" viewBox="0 0 7 7"><rect width="7" height="7" fill="#333"></rect></svg></div>
              <div class="tb big go"><svg width="10" height="8" viewBox="0 0 10 8"><path d="M0 4h6M5 1l4 3-4 3z" fill="#2b5410" stroke="#2b5410" stroke-width=".8"></path></svg></div>
              <div class="tb big"><svg width="8" height="8" viewBox="0 0 8 8"><circle cx="4" cy="4" r="3" fill="#93283a"></circle></svg></div>
              <div class="wee"><div class="tb"></div><div class="tb"></div></div>
            </div>
            <div class="rowb" style="gap:2px">
              <div class="tb low">|◂</div><div class="tb low">◂◂</div><div class="tb low">▸▸</div><div class="tb low">▸|</div>
            </div>
          </div>
          <div class="mtr"><i></i></div>
          <div class="tcirc"></div>
        </div>
        <div class="work">
          <div class="side">
            <div class="phead">TRACKS<i></i></div>
            <div class="plist" style="flex:none;height:441px">
              <div class="rows tracksl">
                ${trackList.map((t, i) => html`
                  <div class="trow ${i === 2 ? 'sel' : ''}">
                    <span class="dot" style="margin-left:6px"></span><span class="bar" style="margin-left:7px"></span>
                    <span class="arr" style="margin-left:5px"></span><span style="margin-left:3px">${t}</span>
                  </div>`)}
              </div>
              <div class="vs"></div>
            </div>
            <div class="gap"></div>
            <div class="phead">GROUPS<i></i></div>
            <div class="plist">
              <div class="rows tracksl">
                <div class="trow"><span class="dot" style="margin-left:2px;background:none;border:.5px solid #444"></span><span class="bar" style="margin-left:7px;background:#446"></span><span style="margin-left:4px">!</span><span style="margin-left:6px">&lt;ALL&gt;</span></div>
              </div>
              <div class="vs"><svg width="7" height="8" viewBox="0 0 7 8" style="display:block"><path d="M0 0h3v4H0zM3 4h4v4H3z" fill="#111"></path></svg></div>
            </div>
          </div>
          <div class="center">
            <div class="overview"><div></div></div>
            <div class="ruler">
              <div class="rlabels"><div class="r1">Timecode</div><div class="r2">Min:Secs</div><div class="r3">Markers</div></div>
              <div class="rbody">
                <div class="selr"></div>
                <div class="tc">${times.map((t) => html`<span>${t}</span>`)}</div>
                <div class="ms">${secs.map((t) => html`<span>${t}</span>`)}</div>
                <div class="mk"></div>
                <div class="flag" style="left:280px"></div>
                <div class="flag" style="left:484px"></div>
                <div class="phr"></div>
              </div>
              <div class="vscroll"></div>
            </div>
            <div class="hrow">
              <div class="hleft"><span><i></i></span><span>INSERTS A-E</span><span>I / O</span></div>
              <div class="div"></div>
              <div class="hedit"><div class="phr" style="top:0;height:8px"></div></div>
              <div class="hcorner"><i></i></div>
            </div>
            <div class="main">
              <div class="heads">${TRACKS.map((t) => this.trackHead(t))}</div>
              <div class="div"></div>
              <div class="edit">${this.lanes()}<div class="playhead"></div></div>
              <div class="vscroll"></div>
            </div>
            <div class="lower">
              <div class="lleft"></div>
              <div class="ledit"></div>
              <div class="vscroll"></div>
            </div>
            <div class="bottom">
              <div class="bleft"><i></i><span>play</span></div>
              <div class="bright"><div class="thumb"></div><div class="zooms"><i></i><i></i><i></i><i></i></div></div>
            </div>
          </div>
          <div class="clips">
            <div class="phead">CLIPS<i></i></div>
            <div class="plist" style="flex:1">
              <div class="rows clipl">
                ${CLIPS.map(([name, bold, fold], i) => html`
                  <div class="crow" style="${i === 18 ? 'background:#a9acc2' : ''}">
                    <span class="dot"></span><span class="arr"></span>
                    ${fold ? html`<span class="arr ar2"></span>` : ''}
                    <span class="txt ${bold ? 'bold' : ''}">${name}</span>
                  </div>`)}
              </div>
              <div class="vs" style="width:8px"><svg width="7" height="8" viewBox="0 0 7 8" style="display:block"><path d="M0 0h3v4H0zM3 4h4v4H3z" fill="#111"></path></svg></div>
            </div>
            <div class="cbar"></div>
          </div>
        </div>
        <div style="height:4px;flex:none;background:#1c1c1c"></div>
        ${this.plugin()}
        <svg class="hand" viewBox="0 0 10 11"><path d="M2 6V3.500h1.200V6 1.500h1.300V6 1h1.300v5-4h1.300v5l1-1.500L9 6 7 11H3.500z" fill="#f6f6f6" stroke="#222" stroke-width=".4"></path></svg>
      </div>
    `;
  }
}
